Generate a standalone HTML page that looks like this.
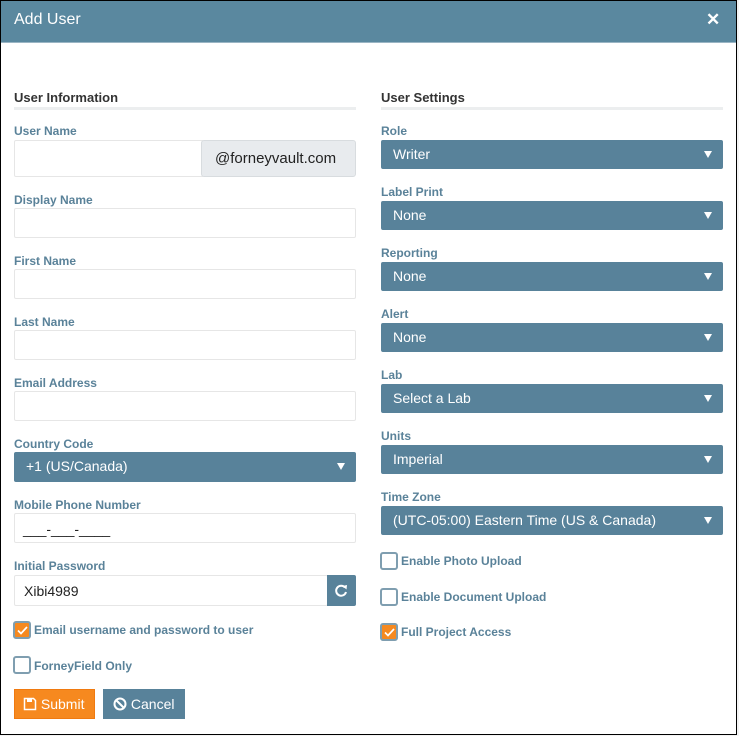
<!DOCTYPE html><html><head><style>
body{margin:0;width:739px;height:736px;background:#f3f3f3;font-family:"Liberation Sans",Arial,sans-serif;position:relative;overflow:hidden}
.dlg{position:absolute;left:0;top:0;width:735px;height:733px;border:1px solid #000;background:#fff}
.hdr{position:absolute;left:0;top:0;width:735px;height:41px;background:#5a889f;border-bottom:1px solid #9ab5c4;color:#fff;font-size:16px}
.hdr .t{position:absolute;left:13px;top:10px}
.hdr .x{position:absolute;left:705px;top:9px;font-size:17px;font-weight:bold}
.a{position:absolute}
.h{font-weight:bold;font-size:13px;color:#333;width:342px;border-bottom:3px solid #eceeef;padding-bottom:2px}
.l{font-weight:bold;font-size:12px;color:#5a8299}
.in{border:1px solid #e6e6e6;border-radius:2px;background:#fff;width:342px;height:28px;box-sizing:border-box;font-size:14px;color:#222;padding:6px 8px}
.sel{background:#58829a;color:#fff;font-size:14px;width:342px;height:29px;box-sizing:border-box;padding:6px 12px;border-radius:2px}
.sel:after{content:"";position:absolute;right:11px;top:11px;border-left:4.5px solid transparent;border-right:4.5px solid transparent;border-top:7px solid #fff}
.cb{width:18px;height:18px;border:2px solid #7f9eb0;border-radius:3px;box-sizing:border-box}
.cb.on{background:#f6891f;border-color:#7f9eb0}
.cb svg{position:absolute;left:1px;top:1px}
.cbl{font-weight:bold;font-size:12px;color:#5a8299}
</style></head><body>
<div class="dlg">
<div class="hdr"><span class="t">Add User</span><span class="x">✕</span></div>
</div>
<div class="a h" style="left:14px;top:90px">User Information</div>
<div class="a h" style="left:381px;top:90px">User Settings</div>

<div class="a l" style="left:14px;top:124px">User Name</div>
<div class="a in" style="left:14px;top:140px;width:190px;height:37px"></div>
<div class="a" style="left:201px;top:140px;width:155px;height:37px;box-sizing:border-box;background:#e8ebee;border:1px solid #d8dcdf;border-radius:3px;font-size:15px;color:#222;padding:9px 0 0 13px">@forneyvault.com</div>

<div class="a l" style="left:14px;top:193px">Display Name</div>
<div class="a in" style="left:14px;top:208px;height:30px"></div>
<div class="a l" style="left:14px;top:254px">First Name</div>
<div class="a in" style="left:14px;top:269px;height:30px"></div>
<div class="a l" style="left:14px;top:315px">Last Name</div>
<div class="a in" style="left:14px;top:330px;height:30px"></div>
<div class="a l" style="left:14px;top:376px">Email Address</div>
<div class="a in" style="left:14px;top:391px;height:30px"></div>
<div class="a l" style="left:14px;top:437px">Country Code</div>
<div class="a sel" style="left:14px;top:452px;height:30px">+1 (US/Canada)</div>
<div class="a l" style="left:14px;top:498px">Mobile Phone Number</div>
<div class="a in" style="left:14px;top:513px;height:30px;padding-top:7px">___-___-____</div>
<div class="a l" style="left:14px;top:559px">Initial Password</div>
<div class="a in" style="left:14px;top:575px;width:314px;height:31px;padding:7px 9px">Xibi4989</div>
<div class="a" style="left:327px;top:575px;width:29px;height:31px;background:#58829a;border-radius:0 2px 2px 0"><svg width="29" height="31" viewBox="0 0 29 31"><path d="M18 12.5 A5 5 0 1 0 19 17" fill="none" stroke="#fff" stroke-width="2"/><path d="M15.5 11 L20 10 L19.5 14.5Z" fill="#fff"/></svg></div>

<div class="a cb on" style="left:13px;top:621px"><svg width="13" height="13" viewBox="0 0 13 13"><path d="M2 6.5 L5 9.5 L11 3" fill="none" stroke="#fff" stroke-width="1.7"/></svg></div>
<div class="a cbl" style="left:34px;top:623px">Email username and password to user</div>
<div class="a cb" style="left:13px;top:656px"></div>
<div class="a cbl" style="left:34px;top:659px">ForneyField Only</div>

<div class="a" style="left:14px;top:689px;width:81px;height:30px;box-sizing:border-box;background:#f6891f;border:1px solid #f07a10;color:#fff;font-size:14px;padding:6px 0 0 8px"><svg width="14" height="14" viewBox="0 0 14 14" style="vertical-align:-2px"><path d="M1.5 1.5h9l2 2v9h-11z" fill="none" stroke="#fff" stroke-width="1.5"/><rect x="4" y="1.5" width="5" height="3.5" fill="#fff"/></svg> Submit</div>
<div class="a" style="left:103px;top:689px;width:82px;height:30px;box-sizing:border-box;background:#58829a;color:#fff;font-size:14px;padding:7px 0 0 10px"><svg width="14" height="14" viewBox="0 0 14 14" style="vertical-align:-2px"><circle cx="7" cy="7" r="5.5" fill="none" stroke="#fff" stroke-width="2"/><path d="M3 3L11 11" stroke="#fff" stroke-width="2"/></svg> Cancel</div>

<div class="a l" style="left:381px;top:124px">Role</div>
<div class="a sel" style="left:381px;top:140px">Writer</div>
<div class="a l" style="left:381px;top:185px">Label Print</div>
<div class="a sel" style="left:381px;top:201px">None</div>
<div class="a l" style="left:381px;top:246px">Reporting</div>
<div class="a sel" style="left:381px;top:262px">None</div>
<div class="a l" style="left:381px;top:307px">Alert</div>
<div class="a sel" style="left:381px;top:323px">None</div>
<div class="a l" style="left:381px;top:368px">Lab</div>
<div class="a sel" style="left:381px;top:384px">Select a Lab</div>
<div class="a l" style="left:381px;top:429px">Units</div>
<div class="a sel" style="left:381px;top:445px">Imperial</div>
<div class="a l" style="left:381px;top:490px">Time Zone</div>
<div class="a sel" style="left:381px;top:506px">(UTC-05:00) Eastern Time (US &amp; Canada)</div>

<div class="a cb" style="left:380px;top:552px"></div>
<div class="a cbl" style="left:401px;top:554px">Enable Photo Upload</div>
<div class="a cb" style="left:380px;top:588px"></div>
<div class="a cbl" style="left:401px;top:590px">Enable Document Upload</div>
<div class="a cb on" style="left:380px;top:623px"><svg width="13" height="13" viewBox="0 0 13 13"><path d="M2 6.5 L5 9.5 L11 3" fill="none" stroke="#fff" stroke-width="1.7"/></svg></div>
<div class="a cbl" style="left:401px;top:625px">Full Project Access</div>
</body></html>
